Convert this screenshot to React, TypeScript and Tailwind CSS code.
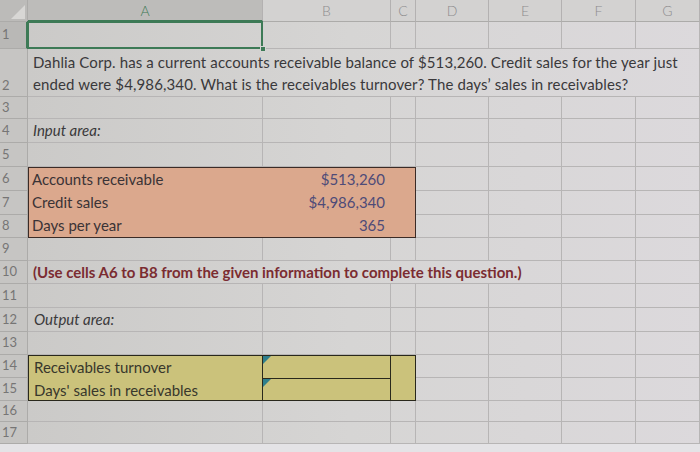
import React from 'react';

// gridline for an ordinary cell
const G = 'border-r border-b border-[#b7b5b5]';
const FONT = { fontFamily: 'Lato, "Open Sans", sans-serif' };

const Empty: React.FC = () => <div className={G} />;

const Blanks: React.FC<{ n: number }> = ({ n }) => (
  <>
    {Array.from({ length: n }).map((_, i) => (
      <Empty key={i} />
    ))}
  </>
);

const RowHead: React.FC<{ n: number; active?: boolean; bottom?: boolean }> = ({ n, active, bottom }) => (
  <div
    className={`flex border-b border-[#acaba9] pl-[2px] text-[13px] text-[#767575] ${
      bottom ? 'items-end pb-[1px]' : 'items-center'
    } ${active ? 'border-r-2 border-r-[#3d7a56] bg-[#b9b8b6]' : 'border-r border-r-[#acaba9] bg-[#c6c5c3]'}`}
  >
    {n}
  </div>
);

const ColHead: React.FC<{ label: string; active?: boolean }> = ({ label, active }) => (
  <div
    className={`flex items-center justify-center border-r border-[#b3b1b1] text-[14px] font-light ${
      active
        ? 'border-b-2 border-b-[#3d7a56] bg-[#bdbcba] text-[#3d7a56]'
        : 'border-b border-b-[#acaba9] bg-[#d3d2d1] text-[#8d8c8e]'
    }`}
  >
    {label}
  </div>
);

export default function App() {
  return (
    <div
      style={FONT}
      className="grid h-[452px] w-[700px] overflow-hidden bg-linear-to-r from-[#cac9c7] via-[#d6d5d4] to-[#dcd9dc] grid-cols-[28px_235px_128px_25px_73px_73px_74px_64px] grid-rows-[22px_27px_48px_22px_24px_24px_24px_24px_23px_23px_23px_24px_24px_23px_23px_23px_21px_22px_1fr]"
    >
      {/* column header */}
      <div className="relative border-r border-b border-[#acaba9] bg-[#bcbbb9]">
        <svg className="absolute right-[2px] bottom-[2px]" width="14" height="14" viewBox="0 0 14 14">
          <polygon points="14,0 14,14 0,14" fill="#d8d7d5" />
        </svg>
      </div>
      <ColHead label="A" active />
      <ColHead label="B" />
      <ColHead label="C" />
      <ColHead label="D" />
      <ColHead label="E" />
      <ColHead label="F" />
      <ColHead label="G" />

      {/* row 1 */}
      <RowHead n={1} active />
      <div className={`${G} relative`}>
        <div className="absolute -top-[1px] -left-[1px] -right-[1px] -bottom-[1px] border-2 border-[#3d7a56]" />
        <div className="absolute -right-[4px] -bottom-[4px] h-[6px] w-[6px] border border-[#d6d5d4] bg-[#3d7a56]" />
      </div>
      <Blanks n={6} />

      {/* row 2 */}
      <RowHead n={2} bottom />
      <div className={`${G} col-span-7 flex flex-col justify-center whitespace-nowrap pl-[5px] text-[15px] leading-[22px] tracking-[0.12px] text-[#3a393b]`}>
        <span>Dahlia Corp. has a current accounts receivable balance of $513,260. Credit sales for the year just</span>
        <span>ended were $4,986,340. What is the receivables turnover? The days’ sales in receivables?</span>
      </div>

      {/* row 3 */}
      <RowHead n={3} />
      <Blanks n={7} />

      {/* row 4 */}
      <RowHead n={4} />
      <div className={`${G} flex items-center pl-[5px] text-[15px] italic text-[#3a393b]`}>Input area:</div>
      <Blanks n={6} />

      {/* row 5 */}
      <RowHead n={5} />
      <Blanks n={7} />

      {/* rows 6-8 input box */}
      <RowHead n={6} />
      <div className="col-span-3 row-span-3 flex flex-col border-[1.5px] border-[#3b2b26] bg-[#dba88d] text-[15px]">
        {[
          ['Accounts receivable', '$513,260'],
          ['Credit sales', '$4,986,340'],
          ['Days per year', '365'],
        ].map(([label, value]) => (
          <div key={label} className="flex flex-1 items-center">
            <span className="flex-1 pl-[3px] text-[#3a3336]">{label}</span>
            <span className="pr-[30px] text-right text-[#4e4b78]">{value}</span>
          </div>
        ))}
      </div>
      <Blanks n={4} />
      <RowHead n={7} />
      <Blanks n={4} />
      <RowHead n={8} />
      <Blanks n={4} />

      {/* row 9 */}
      <RowHead n={9} />
      <Blanks n={7} />

      {/* row 10 */}
      <RowHead n={10} />
      <div className={`${G} col-span-5 flex items-center whitespace-nowrap pl-[5px] text-[15px] font-bold text-[#7b2c31]`}>
        (Use cells A6 to B8 from the given information to complete this question.)
      </div>
      <Blanks n={2} />

      {/* row 11 */}
      <RowHead n={11} />
      <Blanks n={7} />

      {/* row 12 */}
      <RowHead n={12} />
      <div className={`${G} flex items-center pl-[6px] text-[15px] italic text-[#3a393b]`}>Output area:</div>
      <Blanks n={6} />

      {/* row 13 */}
      <RowHead n={13} />
      <Blanks n={7} />

      {/* rows 14-15 output box */}
      <RowHead n={14} />
      <div className="col-span-3 row-span-2 flex border-[1.5px] border-[#29281c] bg-[#cbc27b] text-[15px] text-[#38372c]">
        <div className="flex w-[233.5px] flex-col border-r-[1.5px] border-[#29281c]">
          <span className="flex flex-1 items-center pl-[5px]">Receivables turnover</span>
          <span className="flex flex-1 items-center pl-[5px]">Days' sales in receivables</span>
        </div>
        <div className="flex w-[128px] flex-col border-r-[1.5px] border-[#29281c]">
          <div className="relative flex-1 border-b-[1.5px] border-[#29281c]">
            <svg className="absolute top-0 left-0" width="8" height="8" viewBox="0 0 8 8">
              <polygon points="0,0 8,0 0,8" fill="#2f7f8c" />
            </svg>
          </div>
          <div className="relative flex-1">
            <svg className="absolute top-0 left-0" width="8" height="8" viewBox="0 0 8 8">
              <polygon points="0,0 8,0 0,8" fill="#2f7f8c" />
            </svg>
          </div>
        </div>
        <div className="flex-1" />
      </div>
      <Blanks n={4} />
      <RowHead n={15} />
      <Blanks n={4} />

      {/* rows 16-17 */}
      <RowHead n={16} />
      <Blanks n={7} />
      <RowHead n={17} />
      <Blanks n={7} />

      <div className="col-span-8 bg-[#e4e3e6]" />
    </div>
  );
}
